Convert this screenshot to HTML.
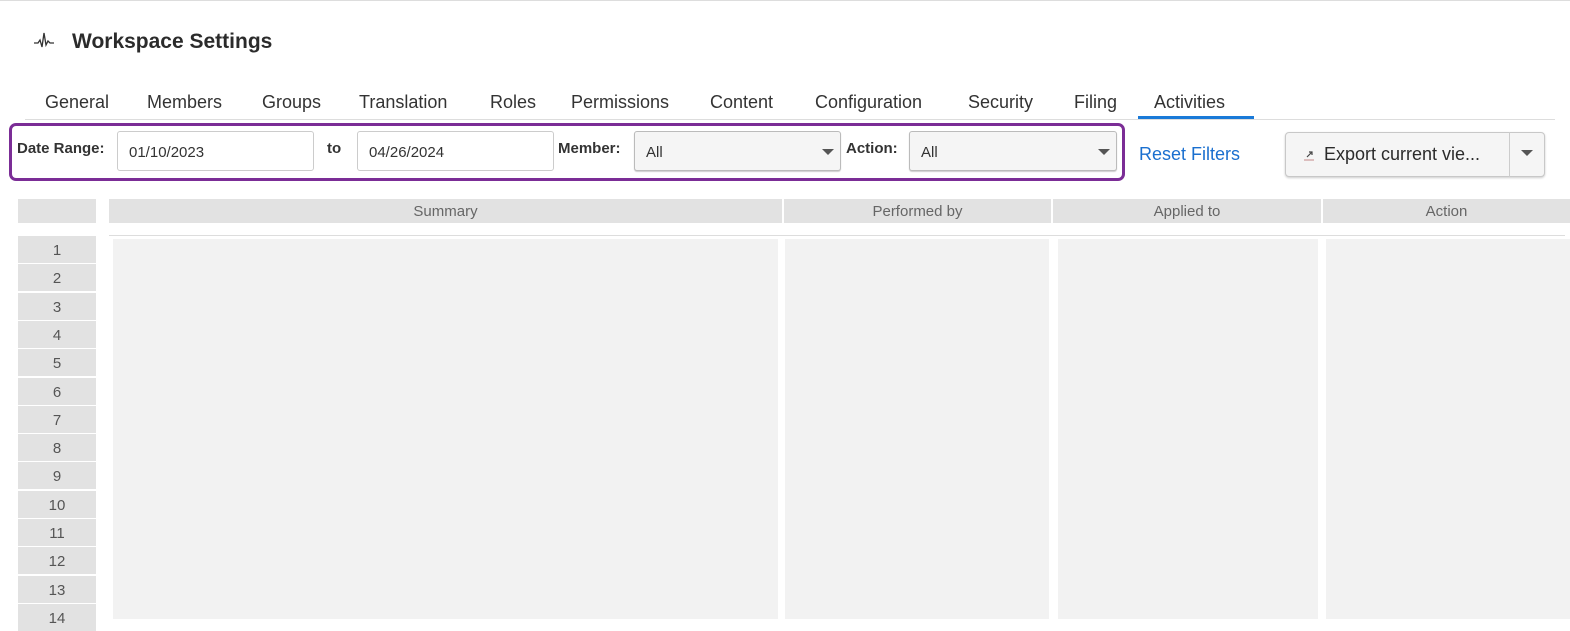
<!DOCTYPE html>
<html><head><style>
body{margin:0;width:1570px;height:617px;overflow:hidden;background:#fff;font-family:"Liberation Sans",sans-serif;position:relative;color:#333}
div,span{position:absolute;box-sizing:border-box}
.tab{top:92px;font-size:18px;color:#333;white-space:nowrap}
.lbl{font-weight:bold;font-size:15px;color:#333;top:140px}
.inp{border:1px solid #ccc;border-radius:3px;background:#fff;height:40px;top:131px;font-size:15px;padding:12px 0 0 11px}
.sel{border:1px solid #bbb;border-radius:3px;background:#f5f5f5;height:40px;top:131px;font-size:15px;padding:12px 0 0 11px;box-shadow:0 1px 1px #ccc}
.tri{width:0;height:0;border-left:6px solid transparent;border-right:6px solid transparent;border-top:6px solid #555;top:17px;right:6px}
.hd{top:199px;height:24px;background:#e2e2e2;font-size:15px;color:#666;text-align:center;padding-top:4px}
.rn{left:18px;width:78px;height:27px;background:#e2e2e2;font-size:15px;color:#555;text-align:center;padding-top:6px}
.cell{top:239px;height:380px;background:#f2f2f2}
</style></head><body>
<div style="left:0;top:0;width:1570px;height:1px;background:#ddd"></div>
<svg style="position:absolute;left:33px;top:31px" width="24" height="20" viewBox="0 0 24 20"><path d="M1 12 L5 12 L7 9 L9 16 L11 2 L13 14 L15 10 L17 12 L21 12" fill="none" stroke="#333" stroke-width="1.3"/></svg>
<div style="left:72px;top:30px;font-size:21px;font-weight:bold;color:#2b2b2b">Workspace Settings</div>
<div class="tab" style="left:45px">General</div>
<div class="tab" style="left:147px">Members</div>
<div class="tab" style="left:262px">Groups</div>
<div class="tab" style="left:359px">Translation</div>
<div class="tab" style="left:490px">Roles</div>
<div class="tab" style="left:571px">Permissions</div>
<div class="tab" style="left:710px">Content</div>
<div class="tab" style="left:815px">Configuration</div>
<div class="tab" style="left:968px">Security</div>
<div class="tab" style="left:1074px">Filing</div>
<div class="tab" style="left:1154px">Activities</div>
<div style="left:25px;top:119px;width:1530px;height:1px;background:#ddd"></div>
<div style="left:1138px;top:116px;width:116px;height:3px;background:#1a7ad8"></div>
<div style="left:9px;top:123px;width:1116px;height:58px;border:3px solid #7b2d96;border-radius:7px"></div>
<div class="lbl" style="left:17px">Date Range:</div>
<div class="inp" style="left:117px;width:197px">01/10/2023</div>
<div class="lbl" style="left:327px">to</div>
<div class="inp" style="left:357px;width:197px">04/26/2024</div>
<div class="lbl" style="left:558px">Member:</div>
<div class="sel" style="left:634px;width:207px">All<span class="tri"></span></div>
<div class="lbl" style="left:846px">Action:</div>
<div class="sel" style="left:909px;width:208px">All<span class="tri"></span></div>
<div style="left:1139px;top:144px;font-size:18px;color:#1a6fcf">Reset Filters</div>
<div style="left:1285px;top:132px;width:260px;height:45px;border:1px solid #c8c8c8;border-radius:4px;background:#f5f5f5;box-shadow:0 1px 2px #ccc"></div>
<div style="left:1509px;top:132px;width:1px;height:45px;background:#ccc"></div>
<svg style="position:absolute;left:1302px;top:148px" width="14" height="14" viewBox="0 0 14 14"><path d="M2 12 L12 12" stroke="#c99" stroke-width="1.2"/><path d="M5 9 L10 4 M7 4 L10 4 L10 7" fill="none" stroke="#444" stroke-width="1.2"/></svg>
<div style="left:1324px;top:144px;font-size:18px;color:#2b2b2b">Export current vie...</div>
<div style="left:1521px;top:150px;width:0;height:0;border-left:6px solid transparent;border-right:6px solid transparent;border-top:6px solid #555"></div>
<div class="hd" style="left:18px;width:78px"></div>
<div class="hd" style="left:109px;width:673px">Summary</div>
<div class="hd" style="left:784px;width:267px">Performed by</div>
<div class="hd" style="left:1053px;width:268px">Applied to</div>
<div class="hd" style="left:1323px;width:247px">Action</div>
<div style="left:109px;top:235px;width:1456px;height:1px;background:#ddd"></div>
<div class="cell" style="left:113px;width:665px"></div>
<div class="cell" style="left:785px;width:264px"></div>
<div class="cell" style="left:1058px;width:260px"></div>
<div class="cell" style="left:1326px;width:244px"></div>
<div class="rn" style="top:236px">1</div>
<div class="rn" style="top:264px">2</div>
<div class="rn" style="top:293px">3</div>
<div class="rn" style="top:321px">4</div>
<div class="rn" style="top:349px">5</div>
<div class="rn" style="top:378px">6</div>
<div class="rn" style="top:406px">7</div>
<div class="rn" style="top:434px">8</div>
<div class="rn" style="top:462px">9</div>
<div class="rn" style="top:491px">10</div>
<div class="rn" style="top:519px">11</div>
<div class="rn" style="top:547px">12</div>
<div class="rn" style="top:576px">13</div>
<div class="rn" style="top:604px">14</div>
</body></html>
